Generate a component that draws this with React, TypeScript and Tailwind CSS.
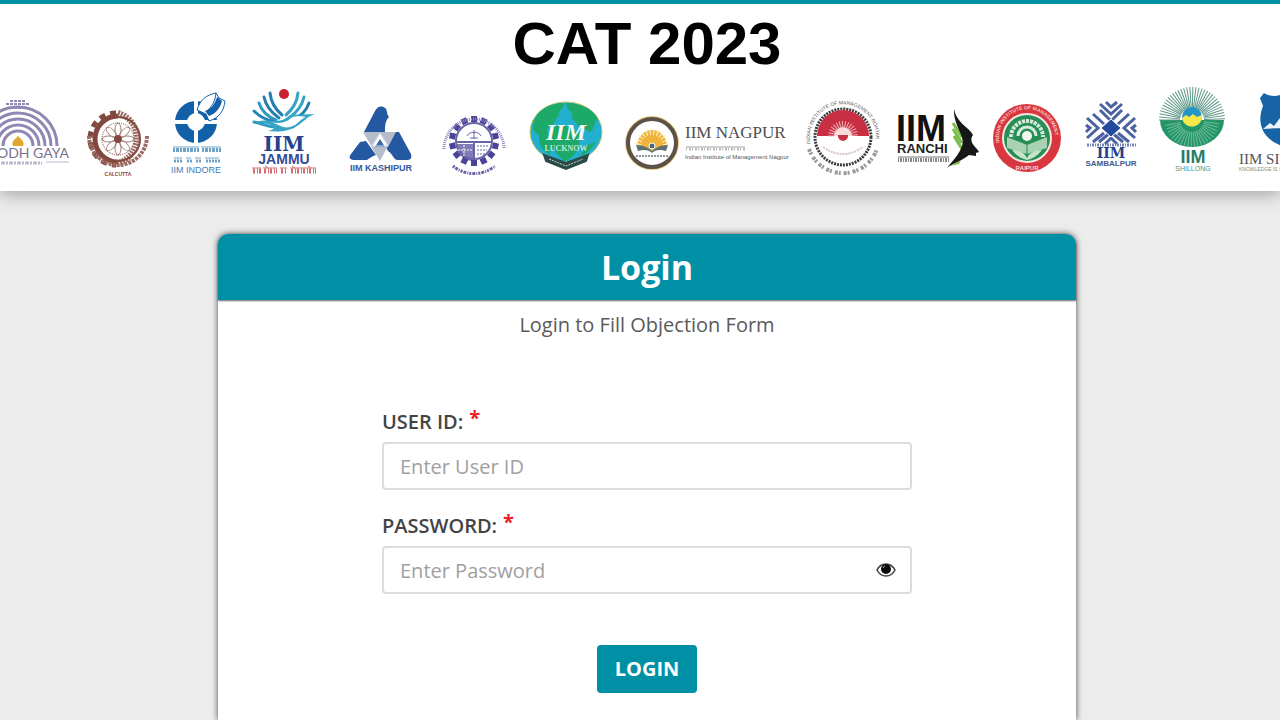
import React, { useState } from 'react';

// Angles spread over an arc, used for ticks, teeth and rays
const ring = (count: number, from = 0, to = 360) =>
  Array.from({ length: count }, (_, i) => from + ((to - from) * i) / count);

const BodhGayaLogo = () => (
  <svg width="104" height="96" viewBox="0 0 104 96" className="shrink-0" role="img" aria-label="IIM Bodh Gaya">
    <g fill="none" stroke="#8f88b4">
      {[39, 33, 27, 21, 15].map((r) => (
        <path key={r} d={`M${50 - r} 62 A${r} ${r} 0 0 1 ${50 + r} 62`} strokeWidth="3" />
      ))}
      <path d="M38 24 H62 M38 20 H62 M42 17 H58" strokeWidth="2" strokeDasharray="3 1" />
    </g>
    <path d="M50 52 C54 56 57 58 55 62 H45 C43 58 46 56 50 52Z" fill="#e0a92f" />
    <text x="101" y="74" textAnchor="end" fontFamily="Lato, sans-serif" fontSize="14" fill="#77738f">BODH GAYA</text>
    <path d="M30 79 H74" stroke="#bcb9cc" strokeWidth="3" strokeDasharray="2 1 4 1" />
    <path d="M78 78 H101" stroke="#b9b5c9" />
  </svg>
);

const CalcuttaLogo = () => (
  <svg width="76" height="96" viewBox="0 0 76 96" className="shrink-0" role="img" aria-label="IIM Calcutta">
    <g fill="none" stroke="#81483f">
      <path d="M38 32 A23 23 0 0 0 38 78" strokeWidth="5" />
      <path d="M36 29 A26 26 0 0 0 36 81" strokeWidth="5" strokeDasharray="6 5" />
      <path d="M38 29 A26 26 0 0 1 38 79" strokeWidth="6" strokeDasharray="2 1" stroke="#9b6a60" />
      <path d="M38 33 A22 22 0 0 1 38 77" strokeWidth="2" />
      <path d="M9 52 A29 29 0 0 0 67 52" strokeWidth="4" strokeDasharray="3 1" stroke="#9b6a60" />
      {ring(8).map((a) => (
        <ellipse key={a} cx="38" cy="46" rx="3" ry="7" strokeWidth="1" stroke="#a77c73" transform={`rotate(${a} 38 55)`} />
      ))}
      <circle cx="38" cy="55" r="16" strokeWidth="1" strokeDasharray="1 1" />
    </g>
    <circle cx="38" cy="55" r="4" fill="#81483f" />
    <text x="38" y="92" textAnchor="middle" fontFamily="Liberation Sans, sans-serif" fontWeight="700" fontSize="5" fill="#81483f">CALCUTTA</text>
  </svg>
);

const IndoreLogo = () => (
  <svg width="72" height="96" viewBox="0 0 72 96" className="shrink-0" role="img" aria-label="IIM Indore">
    <circle cx="32" cy="38" r="15" fill="none" stroke="#1160a8" strokeWidth="12" />
    <path d="M32 14 V62 M8 38 H56" stroke="#fff" strokeWidth="4" />
    <path d="M33 26 C36 16 42 11 52 9 L55 14 L61 17 C60 27 55 34 45 37 L42 30Z" fill="#fff" stroke="#1160a8" />
    <path d="M52 9 C51 18 48 22 43 27" fill="none" stroke="#1160a8" />
    <path d="M41 27 C47 25 51 20 53 13 L58 17 C56 25 51 30 45 32Z" fill="#1160a8" />
    <g fill="none" stroke="#6fa3ca">
      <path d="M9 63 H35 M37 63 H57" />
      <path d="M9 66 H35 M38 66 H57" strokeWidth="4" strokeDasharray="2 1 3 1" />
      <path d="M10 74 H18 M22 74 H27 M31 74 H37 M41 74 H55" />
      <path d="M10 77 H18 M23 77 H28 M32 77 H38 M42 77 H56" strokeWidth="3" strokeDasharray="2 1" />
    </g>
    <text x="32" y="89" textAnchor="middle" fontFamily="Liberation Sans, sans-serif" fontSize="9" fill="#3d80b5">IIM INDORE</text>
  </svg>
);

const JammuLogo = () => (
  <svg width="80" height="96" viewBox="0 0 80 96" className="shrink-0" role="img" aria-label="IIM Jammu">
    <circle cx="40" cy="10" r="5" fill="#c8202f" />
    <g fill="none" strokeWidth="3" strokeLinecap="round">
      <path d="M26 9 C27 19 31 25 38 31 M20 13 C22 23 28 29 35 34" stroke="#237fb0" />
      <path d="M15 19 C18 28 24 33 32 36 M10 38 C18 39 22 44 36 43" stroke="#2f9ac0" />
      <path d="M10 27 C16 33 22 36 29 37" stroke="#2683b4" />
      <path d="M54 9 C53 19 49 25 42 31 M60 13 C58 23 52 29 45 34" stroke="#35a4c5" />
      <path d="M65 19 C62 28 56 33 48 36" stroke="#237fb0" />
    </g>
    <path d="M12 38 C24 34 34 40 42 34 C49 29 60 31 71 30 C62 33 60 38 53 42 C45 48 32 48 24 47 C33 45 31 42 24 40Z" fill="#35a4c5" />
    <path d="M26 38 C34 40 42 39 47 34 C53 31 59 33 62 33 C56 35 54 41 46 43 C38 45 35 40 26 38Z" fill="#fff" />
    <text x="40" y="67" textAnchor="middle" fontFamily="DejaVu Serif, serif" fontWeight="700" fontSize="20" fill="#26418f">IIM</text>
    <text x="40" y="80" textAnchor="middle" fontFamily="Liberation Sans, sans-serif" fontWeight="700" fontSize="14" fill="#344c94">JAMMU</text>
    <g fill="none" stroke="#d36a6f">
      <path d="M8 84 H17 M19 84 H33 M36 84 H43 M46 84 H72" />
      <path d="M9 87 H17 M20 87 H33 M37 87 H43 M47 87 H72" strokeWidth="5" strokeDasharray="2 2 1 1" />
      <path d="M21 82 L24 84 M48 82 L51 84 M64 82 L67 84" />
    </g>
  </svg>
);

const KashipurLogo = () => (
  <svg width="96" height="96" viewBox="0 0 96 96" className="shrink-0" role="img" aria-label="IIM Kashipur">
    <g fill="#2458a0">
      <path d="M32 48 L43 27 C45 23 49 21 53 24 C56 26 54 30 57 33 C53 37 53 42 53 49Z" />
      <path d="M62 48 H67 L79 70 C80 74 79 76 74 76 H65 C61 75 61 70 56 67 L54 63Z" />
      <path d="M28 58 L34 57 L44 71 C40 72 38 74 35 76 H21 C17 75 17 73 19 70Z" />
    </g>
    <g fill="#b6bcca">
      <path d="M31 48 H49 L40 63Z" />
      <path d="M47 48 H64 L56 63Z" />
      <path d="M39 62 H56 L48 77Z" />
    </g>
    <path d="M48 55 L53 63 H43Z" fill="#3c68a8" />
    <path d="M40 62 L48 49 L56 62Z" fill="none" stroke="#dfe3ea" />
    <text x="49" y="87" textAnchor="middle" fontFamily="Liberation Sans, sans-serif" fontWeight="700" fontSize="9" fill="#33579a">IIM KASHIPUR</text>
  </svg>
);

const KozhikodeLogo = () => (
  <svg width="76" height="96" viewBox="0 0 76 96" className="shrink-0" role="img" aria-label="IIM Kozhikode">
    <g fill="#4b4398">
      {ring(14).map((a) => (
        <rect key={a} x="35" y="32" width="6" height="6" transform={`rotate(${a} 38 57)`} />
      ))}
      <path d="M20 60 H37 V77 C29 77 22 72 20 60Z" opacity=".7" />
    </g>
    <g fill="none" stroke="#6963a8">
      <circle cx="38" cy="57" r="18" strokeWidth="2" />
      <path d="M8 65 A30 30 0 1 1 68 65" strokeWidth="3" strokeDasharray="1 1" stroke="#8f8abf" />
      <path d="M17 82 A33 33 0 0 0 59 82" strokeWidth="3" strokeDasharray="2 1 3 1 1 1" />
      <path d="M20 58 H56 M38 58 V76" strokeWidth="2" />
      <path d="M31 52 C33 47 43 47 45 52 M38 46 V55 M34 54 H42" />
      <path d="M41 62 H52 M41 66 H51 M41 70 H49" strokeDasharray="2 1" />
    </g>
    <path d="M22 66 H36 M28 61 V73" stroke="#fff" strokeDasharray="2 1" />
  </svg>
);

const LucknowLogo = () => (
  <svg width="92" height="96" viewBox="0 0 92 96" className="shrink-0" role="img" aria-label="IIM Lucknow">
    <ellipse cx="46" cy="48" rx="36" ry="30" fill="#22afd0" stroke="#c9c46a" />
    <g fill="#1da968">
      <path d="M13 39 C18 25 28 20 43 19 C46 24 36 28 39 32 C34 35 35 43 27 44 C26 51 33 51 31 57 C35 62 32 66 29 70 C20 65 19 58 19 51 C15 49 12 46 13 39Z" />
      <path d="M46 19 C61 19 73 25 78 35 C73 38 75 47 69 48 C64 43 57 43 54 36 C49 34 56 28 48 26Z" />
      <path d="M29 44 C44 38 54 44 60 52 C60 67 52 75 45 77 C36 72 32 60 29 57Z" />
      <path d="M67 61 L76 58 C70 67 66 70 60 72Z" />
    </g>
    <path d="M24 71 L46 79 L68 71 L66 77 L46 85 L26 77Z" fill="#2b4b48" stroke="#2b4b48" strokeWidth="2" />
    <path d="M29 75 L46 82 L63 75" fill="none" stroke="#c9d6d2" strokeDasharray="2 1" />
    <text x="46" y="56" textAnchor="middle" fontFamily="Liberation Serif, serif" fontWeight="700" fontStyle="italic" fontSize="24" fill="#f4fbf4">IIM</text>
    <text x="46" y="67" textAnchor="middle" fontFamily="Liberation Serif, serif" fontWeight="700" fontSize="8" fill="#bfe6d8">LUCKNOW</text>
  </svg>
);

const NagpurLogo = () => (
  <svg width="176" height="96" viewBox="0 0 176 96" className="shrink-0" role="img" aria-label="IIM Nagpur">
    <circle cx="32" cy="59" r="27" fill="#e6c878" />
    <circle cx="32" cy="59" r="24" fill="#fff" stroke="#5b5148" strokeWidth="4" />
    <path d="M17 63 A15 17 0 1 1 47 63 L32 67Z" fill="#f0b43c" />
    <g stroke="#fff3cf">
      {ring(12, -82, 98).map((a) => (
        <path key={a} d="M32 51 V44" transform={`rotate(${a} 32 62)`} />
      ))}
    </g>
    <path d="M16 61 C23 61 29 64 32 67 C35 64 41 61 48 61 L46 67 C40 65 35 66 32 69 C29 66 24 65 18 67Z" fill="#5d7175" />
    <circle cx="32" cy="62" r="3" fill="#456a7e" stroke="#fff" />
    <path d="M16 72 H48" stroke="#8d9698" strokeWidth="2" strokeDasharray="2 1" />
    <text x="65" y="54" fontFamily="Liberation Serif, serif" fontSize="17" fill="#4d4d4f">IIM NAGPUR</text>
    <path d="M66 63 H125" stroke="#a5a5a5" strokeWidth="1" />
    <path d="M66 65 H125" stroke="#bbb" strokeWidth="3" strokeDasharray="1 2 2 1" />
    <text x="65" y="75" fontFamily="Liberation Sans, sans-serif" fontSize="6" fill="#555">Indian Institute of Management Nagpur</text>
  </svg>
);

const RohtakLogo = () => (
  <svg width="80" height="96" viewBox="0 0 80 96" className="shrink-0" role="img" aria-label="IIM Rohtak">
    <path id="rohtak-top" d="M10 69 A33 33 0 1 1 68 69" fill="none" />
    <text fontFamily="Liberation Sans, sans-serif" fontSize="5" fill="#555">
      <textPath href="#rohtak-top" startOffset="10">INDIAN INSTITUTE OF MANAGEMENT ROHTAK</textPath>
    </text>
    <path d="M5 65 A36 36 0 0 0 73 65" fill="none" stroke="#999" strokeWidth="4" strokeDasharray="3 1 2 3" />
    <circle cx="39" cy="53" r="28" fill="none" stroke="#3e3a3b" strokeWidth="3" strokeDasharray="2 1" />
    <circle cx="39" cy="53" r="26" fill="#fff" />
    <path d="M13 52 A26 26 0 0 1 65 52Z" fill="#c92f43" />
    <g stroke="#f3b6bb" strokeWidth="1">
      {ring(15, -90, 98).map((a) => (
        <path key={a} d="M39 43 V37" transform={`rotate(${a} 39 52)`} />
      ))}
    </g>
    <path d="M30 52 A9 9 0 0 1 48 52Z" fill="#f8dcdc" />
    <path d="M35 52 H43 A4 4 0 0 1 35 52Z" fill="#c92f43" stroke="#c92f43" strokeWidth="2" />
    <path d="M19 63 Q39 77 59 63" fill="none" stroke="#d8c4c6" strokeWidth="2" strokeDasharray="2 1" />
  </svg>
);

const RanchiLogo = () => (
  <svg width="92" height="96" viewBox="0 0 92 96" className="shrink-0" role="img" aria-label="IIM Ranchi">
    <text x="4" y="57" fontFamily="Liberation Sans, sans-serif" fontWeight="700" fontSize="36" fill="#111">IIM</text>
    <text x="5" y="69" fontFamily="Liberation Sans, sans-serif" fontWeight="700" fontSize="13" fill="#222">RANCHI</text>
    <path d="M6 73 H57" stroke="#777" />
    <path d="M6 76 H57" stroke="#888" strokeWidth="4" strokeDasharray="1 1 2 1" />
    <g stroke="#79bd45" strokeWidth="3">
      <path d="M61 39 L70 53 M61 45 L70 59 M62 52 L70 65" />
    </g>
    <path d="M62 25 C64 37 75 43 79 48 L81 51 C77 56 81 61 85 65 L87 68 L84 69 L84 72 L77 71 C70 77 61 79 55 84 C61 76 67 71 70 62 C74 52 61 42 62 25Z" fill="#171717" />
    <path d="M58 82 L69 76 L67 80Z" fill="#79bd45" />
  </svg>
);

const RaipurLogo = () => (
  <svg width="76" height="96" viewBox="0 0 76 96" className="shrink-0" role="img" aria-label="IIM Raipur">
    <circle cx="35" cy="54" r="34" fill="#d8373f" />
    <path id="raipur-ring" d="M10 66 A28 28 0 1 1 60 66" fill="none" />
    <text fontFamily="Liberation Sans, sans-serif" fontWeight="700" fontSize="5" fill="#f8c5c2">
      <textPath href="#raipur-ring" startOffset="8">INDIAN INSTITUTE OF MANAGEMENT</textPath>
    </text>
    <circle cx="35" cy="54" r="24" fill="#258f56" stroke="#f6e6df" strokeWidth="2" />
    <g fill="none" stroke="#d7eadb">
      <path d="M19 53 A16 16 0 0 1 51 53" strokeWidth="4" strokeDasharray="3 1" />
      <path d="M26 52 A9 9 0 0 1 44 52" strokeWidth="3" />
    </g>
    <circle cx="35" cy="52" r="5" fill="#f3f7ed" />
    <path d="M15 53 L35 61 L55 53 V64 L35 70 L15 64Z" fill="#a9d2b3" />
    <path d="M35 61 V70" stroke="#258f56" />
    <path d="M20 66 Q31 66 35 74 Q39 66 50 66 Q44 74 35 76 Q26 74 20 66Z" fill="#c7e3cb" />
    <text x="35" y="86" textAnchor="middle" fontFamily="Liberation Sans, sans-serif" fontWeight="700" fontSize="6" fill="#fbd9d5">RAIPUR</text>
  </svg>
);

const SambalpurLogo = () => (
  <svg width="72" height="96" viewBox="0 0 72 96" className="shrink-0" role="img" aria-label="IIM Sambalpur">
    <g stroke="#4a62a0" strokeWidth="3" fill="none">
      <path d="M24 20 L35 30 L46 20 M30 18 L35 23 L41 18" />
      <path d="M24 26 L35 37 L46 26" />
      <path d="M11 34 L22 44 L11 54 M17 30 L28 40 M17 58 L28 49 M10 41 L14 44 L10 48" />
      <path d="M59 34 L48 44 L59 54 M53 30 L42 40 M53 58 L42 49 M60 41 L56 44 L60 48" />
      <path d="M23 58 L35 48 L47 58 M29 60 L35 54 L41 60" />
    </g>
    <path d="M35 35 L45 44 L35 53 L25 44Z" fill="#234b9d" stroke="#fff" />
    <path d="M11 61 H60" stroke="#7382ae" strokeWidth="3" strokeDasharray="2 1 1 1" />
    <text x="35" y="74" textAnchor="middle" fontFamily="DejaVu Serif, serif" fontWeight="700" fontSize="14" fill="#243f8c">IIM</text>
    <text x="35" y="82" textAnchor="middle" fontFamily="Liberation Sans, sans-serif" fontWeight="700" fontSize="8" fill="#43568d">SAMBALPUR</text>
  </svg>
);

const ShillongLogo = () => (
  <svg width="72" height="96" viewBox="0 0 72 96" className="shrink-0" role="img" aria-label="IIM Shillong">
    <path d="M4 36 A32 27 0 0 0 68 36Z" fill="#249568" />
    <g stroke="#5b9484">
      {ring(34, -90, 93).map((a) => (
        <path key={a} d="M36 24 V3" transform={`rotate(${a} 36 36)`} />
      ))}
    </g>
    <g stroke="#6fbc9b">
      {ring(22, 98, 266).map((a) => (
        <path key={a} d="M36 24 V9" transform={`rotate(${a} 36 36)`} />
      ))}
    </g>
    <circle cx="36" cy="33" r="10" fill="#2396c8" />
    <path d="M26 34 L30 31 L33 33 L37 30 L41 33 L46 31 A10 10 0 0 1 26 34Z" fill="#f5e94a" />
    <text x="37" y="79" textAnchor="middle" fontFamily="Liberation Sans, sans-serif" fontWeight="700" fontSize="18" fill="#287c65">IIM</text>
    <text x="37" y="87" textAnchor="middle" fontFamily="Liberation Sans, sans-serif" fontSize="7" fill="#4e9481">SHILLONG</text>
  </svg>
);

const SirmaurLogo = () => (
  <svg width="90" height="96" viewBox="0 0 90 96" className="shrink-0" role="img" aria-label="IIM Sirmaur">
    <path d="M24 14 L28 9 C36 14 43 12 49 9 C55 12 62 14 70 9 L74 14 L71 21 C77 37 74 53 49 63 C24 55 21 37 27 22Z" fill="#1664a6" />
    <path d="M27 45 L34 39 L38 42 L44 34 L52 42 L59 37 L69 46 C57 44 41 44 27 45Z" fill="#eef4f9" />
    <text x="3" y="80" fontFamily="Liberation Serif, serif" fontSize="15" fill="#555">IIM SIRMAUR</text>
    <text x="3" y="87" fontFamily="Liberation Sans, sans-serif" fontSize="5" fill="#888">KNOWLEDGE IS SUPREME</text>
  </svg>
);

const EyeIcon = () => (
  <svg width="20" height="16" viewBox="0 0 20 16" aria-hidden="true">
    <path d="M1 8 C5 0 15 0 19 8 C15 16 5 16 1 8Z" fill="#fff" stroke="#444" strokeWidth="1.6" />
    <circle cx="10" cy="7" r="5" fill="#0b0b0b" />
    <path d="M7 6 A3 3 0 0 1 9 4" fill="none" stroke="#aaa" />
  </svg>
);

const Header = () => (
  <header className="relative z-10 bg-white border-t-4 border-[#0090a5] pl-3.5 pt-2.5 pb-[11px] shadow-[0_4px_16px_rgba(0,0,0,0.3)]">
    <h1 className="text-center font-['Liberation_Sans',sans-serif] text-[60px] leading-[60px] font-bold text-black">CAT 2023</h1>
    <div className="mt-2.5 -ml-3.5 pl-3.5 flex justify-center gap-2 overflow-hidden">
      <BodhGayaLogo />
      <CalcuttaLogo />
      <IndoreLogo />
      <JammuLogo />
      <KashipurLogo />
      <KozhikodeLogo />
      <LucknowLogo />
      <NagpurLogo />
      <RohtakLogo />
      <RanchiLogo />
      <RaipurLogo />
      <SambalpurLogo />
      <ShillongLogo />
      <SirmaurLogo />
    </div>
  </header>
);

const inputClass =
  'block w-full h-12 rounded border-2 border-[#dcdcdc] bg-white px-4 text-xl text-[#444] placeholder:text-[#a0a0a0] outline-none focus:border-[#0090a5]';

const FieldLabel = ({ htmlFor, children }: { htmlFor: string; children: React.ReactNode }) => (
  <label htmlFor={htmlFor} className="flex items-start gap-1.5 h-9 text-xl leading-8 font-semibold text-[#444]">
    {children}
    <span className="leading-6 font-bold text-[#ee1c23]">*</span>
  </label>
);

const LoginForm = () => {
  const [showPassword, setShowPassword] = useState(false);

  return (
    <form className="mx-auto mt-[66px] w-full max-w-[530px]" onSubmit={(e) => e.preventDefault()}>
      <FieldLabel htmlFor="user-id">USER ID:</FieldLabel>
      <input id="user-id" type="text" placeholder="Enter User ID" className={inputClass} />

      <div className="mt-5">
        <FieldLabel htmlFor="password">PASSWORD:</FieldLabel>
        <div className="relative">
          <input
            id="password"
            type={showPassword ? 'text' : 'password'}
            placeholder="Enter Password"
            className={`${inputClass} pr-12`}
          />
          <button
            type="button"
            aria-label="Show password"
            onClick={() => setShowPassword(!showPassword)}
            className="absolute inset-y-0 right-4 flex items-center"
          >
            <EyeIcon />
          </button>
        </div>
      </div>

      <div className="mt-[51px] flex justify-center">
        <button type="submit" className="h-12 rounded bg-[#0090a5] px-[18px] text-xl font-bold text-white">
          LOGIN
        </button>
      </div>
    </form>
  );
};

export default function App() {
  return (
    <div className="min-h-screen flex flex-col bg-[#ececec] font-['Open_Sans',sans-serif]">
      <Header />
      <main className="flex-1 flex justify-center pl-3.5 pt-[43px]">
        <section className="w-full max-w-[858px] rounded-t-[10px] bg-white pb-6 shadow-[0_0_6px_rgba(0,0,0,0.7)]">
          <h2 className="rounded-t-[10px] bg-[#0090a5] text-center text-[34px] leading-[66px] font-bold text-white shadow-[0_1px_2px_rgba(0,0,0,0.6)]">
            Login
          </h2>
          <p className="mt-2.5 text-center text-xl leading-[30px] text-[#5a5a5a]">Login to Fill Objection Form</p>
          <LoginForm />
        </section>
      </main>
    </div>
  );
}
